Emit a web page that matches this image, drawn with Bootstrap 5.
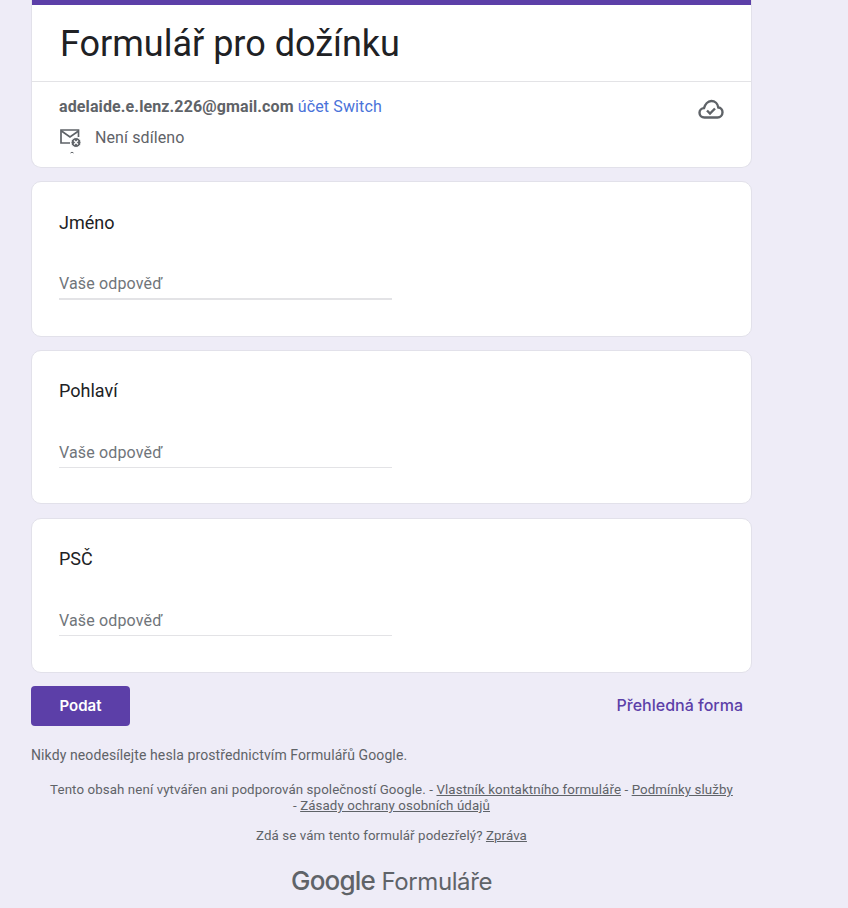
<!DOCTYPE html>
<html lang="cs">
  <head>
    <meta charset="UTF-8" />
    <meta name="viewport" content="width=device-width, initial-scale=1" />
    <title>Formulář pro dožínku</title>
    <link href="https://cdn.jsdelivr.net/npm/bootstrap@5.3.0/dist/css/bootstrap.min.css" rel="stylesheet" />
    <style>
      html, body { height: 908px; overflow: hidden; }
      body { background: #eeecf7; font-family: Roboto, "Liberation Sans", sans-serif; color: #202124; }
      .form-col { width: 721px; margin-left: 31px; }
      .form-card { background: #fff; border: 1px solid #e2e1ea; border-radius: 10px; }
      .head-card { border-top: 0; border-top-left-radius: 0; border-top-right-radius: 0; height: 168px; overflow: hidden; }
      .head-bar { height: 5px; background: #5c3fa8; margin: 0 -1px; }
      .form-title { font-size: 36px; line-height: 44px; font-weight: 400; padding: 17px 27px 0 28px; height: 76px; margin: 0; }
      .acc-block { border-top: 1px solid #e3e3e6; padding: 15px 27px 0; height: 87px; }
      .acc-mail { font-size: 16px; line-height: 20px; font-weight: 700; color: #5f6368; letter-spacing: .12px; }
      .acc-link { font-weight: 400; color: #4a72d9; text-decoration: none; }
      .not-shared { font-size: 16px; line-height: 20px; color: #5f6368; letter-spacing: .1px; margin-top: 10px; gap: 14px; }
      .not-shared span { margin-top: 1px; }
      .q-card { margin-top: 14px; padding: 28px 27px 0; }
      .q-card-first { margin-top: 13px; padding-top: 29px; }
      .q-card-first + .q-card { margin-top: 13px; }
      .q-title { font-size: 18px; line-height: 24px; color: #202124; }
      .q-input { width: 333px; margin-top: 40px; padding-bottom: 4px; font-size: 16px; line-height: 20px; letter-spacing: .15px; color: #70757a; border-bottom: 1px solid #e3e3e6; }
      .q-card-first .q-input { margin-top: 39px; border-bottom-width: 2px; }
      .send-btn { width: 99px; height: 40px; background: #5c3fa8; color: #fff; border: 0; border-radius: 4px; font-family: Inter, Roboto, sans-serif; font-size: 15px; font-weight: 600; padding: 0; }
      .send-btn:hover { background: #5c3fa8; color: #fff; }
      .clear-link { font-family: Inter, Roboto, sans-serif; font-size: 16px; font-weight: 500; color: #5c3fa8; text-decoration: none; margin-right: 9px; padding-bottom: 2px; }
      .foot-txt { font-size: 14px; line-height: 16px; letter-spacing: .1px; color: #5f6368; }
      .foot-txt a { color: #5f6368; }
      .foot-small { font-size: 13.3px; }
      .brand-line { color: #5f6368; font-size: 26px; line-height: 32px; }
      .brand-g { font-family: Inter, Roboto, sans-serif; font-weight: 500; letter-spacing: -.8px; }
      .brand-f { font-family: Inter, Roboto, sans-serif; font-weight: 400; font-size: 24px; letter-spacing: -.4px; }
    </style>
  </head>
  <body>
    <div class="form-col">
      <!-- Hlavicka -->
      <div class="form-card head-card">
        <div class="head-bar"></div>
        <h1 class="form-title">Formulář pro dožínku</h1>
        <div class="acc-block d-flex justify-content-between">
          <div>
            <div class="acc-mail">adelaide.e.lenz.226@gmail.com <a class="acc-link" href="#">účet Switch</a></div>
            <div class="not-shared d-flex align-items-start">
              <svg width="22" height="27" viewBox="0 0 22 27" fill="none" stroke="#5f6368" stroke-width="1.700">
                <path d="M11 16H2V3h17.500v7" />
                <path d="M2.500 4l8.500 6 8.500-6" />
                <circle cx="17" cy="15.500" r="5" fill="#5f6368" stroke="#fff" stroke-width="1" />
                <path d="M15 13.500l4 4M19 13.500l-4 4" stroke="#fff" stroke-width="1.200" />
                <path d="M11.500 26l1.500-.8 1.500.8" stroke-width="1" />
              </svg>
              <span>Není sdíleno</span>
            </div>
          </div>
          <svg width="26" height="20" viewBox="0 0 26 20" fill="none" stroke="#5f6368" stroke-width="2.400" style="margin-top:2px">
            <path d="M6.500 18.500C3.500 18.500 1.500 16.400 1.500 13.800c0-2.500 2-4.500 4.500-4.700C7 5.700 9.700 2 13.300 2c3.700 0 6.500 2.800 7 6.500 2.500.2 4.200 2.300 4.200 4.800 0 2.900-2.200 5.200-5 5.200z" />
            <path d="M9 11.500l3 3 5-5" />
          </svg>
        </div>
      </div>

      <!-- Otazky -->
      <div class="form-card q-card q-card-first" style="height:156px">
        <div class="q-title">Jméno</div>
        <div class="q-input">Vaše odpověď</div>
      </div>
      <div class="form-card q-card" style="height:154px">
        <div class="q-title">Pohlaví</div>
        <div class="q-input">Vaše odpověď</div>
      </div>
      <div class="form-card q-card" style="height:155px">
        <div class="q-title">PSČ</div>
        <div class="q-input">Vaše odpověď</div>
      </div>

      <div class="d-flex justify-content-between align-items-center" style="margin-top:13px">
        <button class="btn send-btn" type="button">Podat</button>
        <a class="clear-link" href="#">Přehledná forma</a>
      </div>

      <div class="foot-txt" style="margin-top:21px">Nikdy neodesílejte hesla prostřednictvím Formulářů Google.</div>
      <div class="foot-txt foot-small text-center" style="margin-top:19px">
        Tento obsah není vytvářen ani podporován společností Google. - <a href="#">Vlastník kontaktního formuláře</a> - <a href="#">Podmínky služby</a><br />
        - <a href="#">Zásady ochrany osobních údajů</a>
      </div>
      <div class="foot-txt foot-small text-center" style="margin-top:14px">Zdá se vám tento formulář podezřelý? <a href="#">Zpráva</a></div>
      <div class="brand-line text-center" style="margin-top:21px">
        <span class="brand-g">Google</span> <span class="brand-f">Formuláře</span>
      </div>
    </div>
    <script src="https://cdn.jsdelivr.net/npm/bootstrap@5.3.0/dist/js/bootstrap.bundle.min.js"></script>
  </body>
</html>
